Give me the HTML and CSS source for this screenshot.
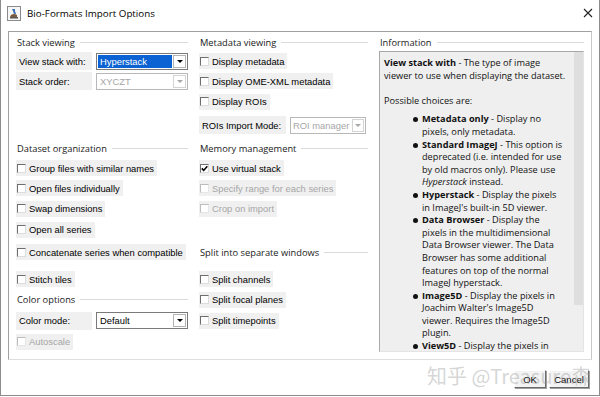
FILE: index.html
```html
<!DOCTYPE html>
<html lang="en">
<head>
    <meta charset="UTF-8">
    <meta name="viewport" content="width=device-width, initial-scale=1.0">
    <title>Bio-Formats Import Options</title>
    <link rel="stylesheet" href="styles.css">
</head>
<body>
    <div class="window">
        <div class="titlebar">
            <svg class="appicon" width="14" height="15" viewBox="0 0 14 15">
                <rect x="0.5" y="0.5" width="13" height="14" fill="#f6f6f6" stroke="#8a8a8a"/>
                <path d="M5 3 L8 3 L8 5 L9 8 L7 8 L6 5 Z" fill="#3b6fb6"/>
                <path d="M4 9 Q7 7 10 9 L10 11 L3 11 Z" fill="#7a5a3a"/>
                <rect x="3" y="11" width="8" height="1.5" fill="#555"/>
            </svg>
            <span class="title">Bio-Formats Import Options</span>
            <svg class="close" width="10" height="10" viewBox="0 0 10 10">
                <path d="M1 1 L9 9 M9 1 L1 9" stroke="#222" stroke-width="1.1"/>
            </svg>
        </div>

        <div class="panel">
            <!-- column 1 -->
            <div class="heading">Stack viewing</div>
            <div class="field">
                <span class="lbl">View stack with:</span>
                <span class="combo"><span class="val sel">Hyperstack</span><span class="arrow"></span></span>
            </div>
            <div class="field">
                <span class="lbl">Stack order:</span>
                <span class="combo off"><span class="val">XYCZT</span><span class="arrow"></span></span>
            </div>
            <div></div>
            <div></div>
            <div class="heading">Dataset organization</div>
            <label class="check"><span class="box"></span>Group files with similar names</label>
            <label class="check"><span class="box"></span>Open files individually</label>
            <label class="check"><span class="box"></span>Swap dimensions</label>
            <label class="check"><span class="box"></span>Open all series</label>
            <label class="check"><span class="box"></span>Concatenate series when compatible</label>
            <label class="check low"><span class="box"></span>Stitch tiles</label>
            <div class="heading">Color options</div>
            <div class="field">
                <span class="lbl">Color mode:</span>
                <span class="combo"><span class="val">Default</span><span class="arrow"></span></span>
            </div>
            <label class="check off"><span class="box"></span>Autoscale</label>

            <!-- column 2 -->
            <div class="heading">Metadata viewing</div>
            <label class="check"><span class="box"></span>Display metadata</label>
            <label class="check"><span class="box"></span>Display OME-XML metadata</label>
            <label class="check"><span class="box"></span>Display ROIs</label>
            <div class="field">
                <span class="lbl wide">ROIs Import Mode:</span>
                <span class="combo off short"><span class="val">ROI manager</span><span class="arrow"></span></span>
            </div>
            <div class="heading">Memory management</div>
            <label class="check"><span class="box on"><svg width="7" height="7" viewBox="0 0 7 7"><path d="M0.8 3.4 L2.7 5.4 L6.3 1.2" fill="none" stroke="#000" stroke-width="1.6"/></svg></span>Use virtual stack</label>
            <label class="check off"><span class="box"></span>Specify range for each series</label>
            <label class="check off"><span class="box"></span>Crop on import</label>
            <div></div>
            <div class="heading">Split into separate windows</div>
            <label class="check low"><span class="box"></span>Split channels</label>
            <label class="check"><span class="box"></span>Split focal planes</label>
            <label class="check"><span class="box"></span>Split timepoints</label>
            <div></div>

            <!-- column 3 -->
            <div class="infocol">
                <div class="heading">Information</div>
                <div class="info">
                    <div class="info-text">
                        <p><b>View stack with</b> - The type of image<br>viewer to use when displaying the dataset.</p>
                        <p class="choices">Possible choices are:</p>
                        <ul>
                            <li><b>Metadata only</b> - Display no pixels, only metadata.</li>
                            <li><b>Standard ImageJ</b> - This option is deprecated (i.e. intended for use by old macros only). Please use <i>Hyperstack</i> instead.</li>
                            <li><b>Hyperstack</b> - Display the pixels in ImageJ's built-in 5D viewer.</li>
                            <li><b>Data Browser</b> - Display the pixels in the multidimensional Data Browser viewer. The Data Browser has some additional features on top of the normal ImageJ hyperstack.</li>
                            <li><b>Image5D</b> - Display the pixels in Joachim Walter's Image5D viewer. Requires the Image5D plugin.</li>
                            <li><b>View5D</b> - Display the pixels in Rainer Heintzmann's View5D viewer.</li>
                        </ul>
                    </div>
                    <div class="scroll"><div class="thumb"></div></div>
                </div>
            </div>
        </div>

        <div class="buttons">
            <button class="btn ok">OK</button>
            <button class="btn cancel">Cancel</button>
        </div>

        <div class="watermark">知乎 @Treasure森</div>
    </div>
</body>
</html>
```

FILE: styles.css
```css
body { margin: 0; background: #fff; color: #000; font-family: "Liberation Sans", Arial, sans-serif; font-size: 9.4px; }

.window { position: relative; width: 600px; height: 396px; box-sizing: border-box; border: 1px solid #8c8c8c; border-top: none; display: flex; flex-direction: column; background: #fff; }

.titlebar { height: 26px; display: flex; align-items: center; gap: 6px; padding: 0 6px; font-family: "Open Sans", sans-serif; font-size: 9.8px; color: #000; }
.appicon { flex: none; }
.title { flex: 1; }

.panel { margin: 5px 7px 0; height: 329px; box-sizing: border-box; border: 1px solid; border-color: #a0a0a0 #c8c8c8 #dedede #a0a0a0; padding: 1px 7px 0; display: grid; grid-template-columns: 172px 169px 205px; grid-template-rows: 18px 20px 20px 21px 26px 20px 20px 20px 21px 21px 24px 25px 21px 21px 21px; grid-auto-flow: column; column-gap: 11px; align-items: center; }

.heading { display: flex; align-items: center; gap: 5px; font-family: "Open Sans", sans-serif; font-size: 9.3px; color: #1a1a1a; padding-left: 1px; }
.heading::after { content: ""; flex: 1; height: 1px; background: #dadada; }

.check { justify-self: start; display: inline-flex; align-items: center; gap: 3px; height: 16px; padding: 0 3px 0 1px; background: #f0f0f0; white-space: nowrap; }
.check.low { align-self: end; margin-bottom: 2px; }
.box { width: 9px; height: 9px; box-sizing: border-box; border: 1px solid; border-color: #6e6e6e #dcdcdc #dcdcdc #6e6e6e; background: #fff; display: flex; align-items: center; justify-content: center; }
.box svg { display: block; }
.check.off { color: #a6a6a6; }
.check.off .box { border-color: #bdbdbd #e6e6e6 #e6e6e6 #bdbdbd; }

.field { display: flex; align-items: center; gap: 4px; }
.lbl { width: 76px; height: 18px; box-sizing: border-box; padding-left: 3px; background: #f0f0f0; display: flex; align-items: center; white-space: nowrap; }
.lbl.wide { width: 87px; }
.combo { flex: 1; height: 17px; box-sizing: border-box; border: 1px solid #7a7a7a; background: #fff; display: flex; }
.combo.short { flex: none; width: 76px; }
.val { flex: 1; margin: 1px; padding-left: 2px; display: flex; align-items: center; white-space: nowrap; overflow: hidden; }
.short .val { padding-left: 1px; }
.val.sel { background: #0b63d3; color: #fff; }
.arrow { width: 13px; flex: none; margin: 1px 1px 1px 0; box-sizing: border-box; border: 1px solid #b4b4b4; background: #fff; display: flex; align-items: center; justify-content: center; }
.short .arrow { width: 12px; }
.arrow::before { content: ""; border: 3px solid transparent; border-top: 3px solid #000; border-bottom: 0; }
.combo.off { border-color: #b8b8b8; color: #a6a6a6; }
.combo.off .arrow { border-color: #d4d4d4; }
.combo.off .arrow::before { border-top-color: #a8a8a8; }

.infocol { grid-row: 1 / -1; align-self: stretch; display: flex; flex-direction: column; }
.infocol .heading { height: 18px; }
.info { flex: 1; min-height: 0; display: flex; border: 1px solid; border-color: #a8a8a8 #e4e4e4 #e4e4e4 #a8a8a8; background: #efefef; overflow: hidden; }
.info-text { flex: 1; padding: 5px 3px 0 4px; font-family: "Open Sans", sans-serif; font-size: 9.2px; line-height: 12.6px; color: #111; }
.info-text p { margin: 0 0 12.6px; white-space: nowrap; }
.info-text p.choices { margin-bottom: 6px; }
.info-text ul { margin: 0 5px 0 0; padding-left: 38px; list-style: none; }
.info-text li { position: relative; }
.info-text li::before { content: ""; position: absolute; left: -9px; top: 4px; width: 5px; height: 5px; border-radius: 50%; background: #111; }
.scroll { width: 9px; flex: none; }
.thumb { height: 253px; background: #dedede; }

.buttons { display: flex; justify-content: flex-end; gap: 3px; padding: 10px 10px 0; }
.btn { height: 18px; padding: 0; font-family: "Liberation Sans", Arial, sans-serif; font-size: 9.5px; color: #000; background: #f3f3f3; border: 1px solid; border-color: #fff #6a6a6a #6a6a6a #fff; box-shadow: 1px 1px 0 #a0a0a0; }
.btn.ok { width: 32px; }
.btn.cancel { width: 40px; }

.watermark { position: absolute; right: 8px; bottom: 5px; font-family: "Noto Sans CJK SC", sans-serif; font-size: 20px; color: rgba(150, 150, 150, 0.4); pointer-events: none; white-space: nowrap; }
```
